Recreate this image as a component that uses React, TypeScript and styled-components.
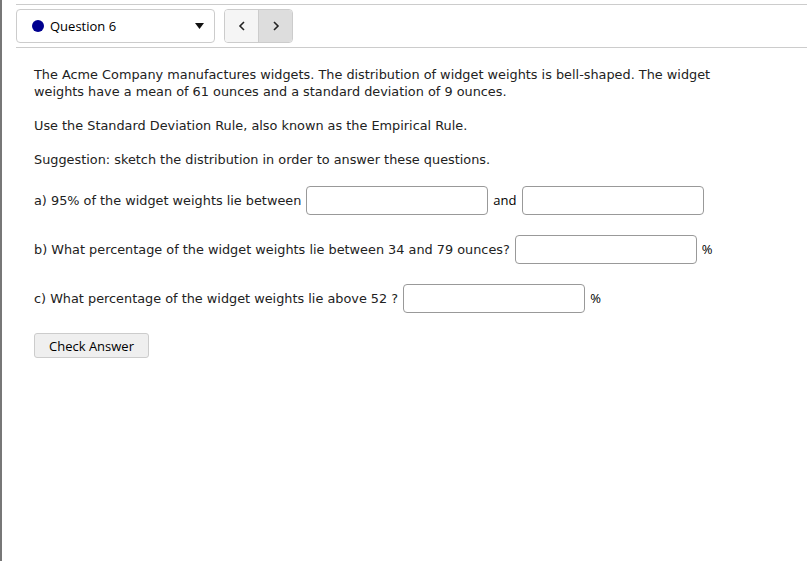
import React from 'react';
import styled, { createGlobalStyle } from 'styled-components';

const GlobalStyle = createGlobalStyle`
  html, body {
    margin: 0;
    padding: 0;
    background: #fff;
  }
  body {
    font-family: "DejaVu Sans", Verdana, sans-serif;
    color: #222;
  }
`;

export default function App() {
  return (
    <Page>
      <GlobalStyle />
      <TopBar>
        <QuestionSelect>
          <Dot />
          <SelectLabel>Question 6</SelectLabel>
          <svg width="9" height="6" viewBox="0 0 9 6">
            <path d="M0 0 L9 0 L4.5 6 Z" fill="#111" />
          </svg>
        </QuestionSelect>
        <NavGroup>
          <NavButton>
            <Chevron dir="left" />
          </NavButton>
          <NavButton active>
            <Chevron dir="right" />
          </NavButton>
        </NavGroup>
      </TopBar>
      <Content>
        <Para>
          The Acme Company manufactures widgets. The distribution of widget weights is bell-shaped. The widget
          weights have a mean of 61 ounces and a standard deviation of 9 ounces.
        </Para>
        <Para>Use the Standard Deviation Rule, also known as the Empirical Rule.</Para>
        <Para>Suggestion: sketch the distribution in order to answer these questions.</Para>
        <Questions>
          <Row>
            <span>a) 95% of the widget weights lie between</span>
            <AnswerBox />
            <Aside>and</Aside>
            <AnswerBox />
          </Row>
          <Row>
            <span>b) What percentage of the widget weights lie between 34 and 79 ounces?</span>
            <AnswerBox />
            <Aside>%</Aside>
          </Row>
          <Row>
            <span>c) What percentage of the widget weights lie above 52 ?</span>
            <AnswerBox />
            <Aside>%</Aside>
          </Row>
        </Questions>
        <CheckButton>Check Answer</CheckButton>
      </Content>
    </Page>
  );
}

function Chevron({ dir }: { dir: 'left' | 'right' }) {
  return (
    <svg width="8" height="10" viewBox="0 0 8 10">
      <path
        d={dir === 'left' ? 'M6 1 L2 5 L6 9' : 'M2 1 L6 5 L2 9'}
        fill="none"
        stroke="#222"
        strokeWidth="1.6"
      />
    </svg>
  );
}

const Page = styled.div`
  min-height: 561px;
  box-sizing: border-box;
  border-left: 2px solid #777;
  padding: 4px 0 0 14px;
`;

const TopBar = styled.div`
  display: flex;
  align-items: center;
  gap: 9px;
  border-top: 1px solid #ccc;
  border-bottom: 1px solid #ccc;
  padding: 4px 0 4px 0;
`;

const QuestionSelect = styled.div`
  width: 199px;
  height: 34px;
  box-sizing: border-box;
  border: 1px solid #ccc;
  border-radius: 4px;
  display: flex;
  align-items: center;
  padding: 0 10px 0 15px;
  font-family: "Open Sans", "Noto Sans", sans-serif;
  font-size: 13px;
  color: #000;
`;

const Dot = styled.span`
  width: 12px;
  height: 12px;
  border-radius: 50%;
  background: #00008f;
  margin-right: 6px;
`;

const SelectLabel = styled.span`
  flex: 1;
`;

const NavGroup = styled.div`
  display: flex;
  height: 34px;
  box-sizing: border-box;
  border: 1px solid #ccc;
  border-radius: 4px;
  overflow: hidden;
`;

const NavButton = styled.div<{ active?: boolean }>`
  width: 33px;
  display: flex;
  align-items: center;
  justify-content: center;
  background: ${(p) => (p.active ? '#ddd' : '#f5f5f5')};
  & + & {
    border-left: 1px solid #ccc;
  }
`;

const Content = styled.div`
  padding: 18px 0 0 18px;
  font-size: 12.85px;
  line-height: 17px;
`;

const Para = styled.p`
  margin: 0 0 17px 0;
  max-width: 720px;
`;

const Questions = styled.div`
  padding-top: 1px;
`;

const Row = styled.div`
  display: flex;
  align-items: center;
  gap: 5px;
  height: 29px;
  margin-bottom: 20px;
`;

const AnswerBox = styled.input.attrs({ type: 'text' })`
  width: 182px;
  height: 29px;
  box-sizing: border-box;
  border: 1px solid #999;
  border-radius: 4px;
`;

const Aside = styled.span`
  font-family: "Open Sans", "Noto Sans", sans-serif;
  font-size: 13px;
  color: #000;
`;

const CheckButton = styled.button`
  width: 115px;
  height: 25px;
  border: 1px solid #ccc;
  border-radius: 3px;
  background: #efefef;
  font-family: "Open Sans", "Noto Sans", sans-serif;
  font-size: 13px;
  color: #000;
`;
